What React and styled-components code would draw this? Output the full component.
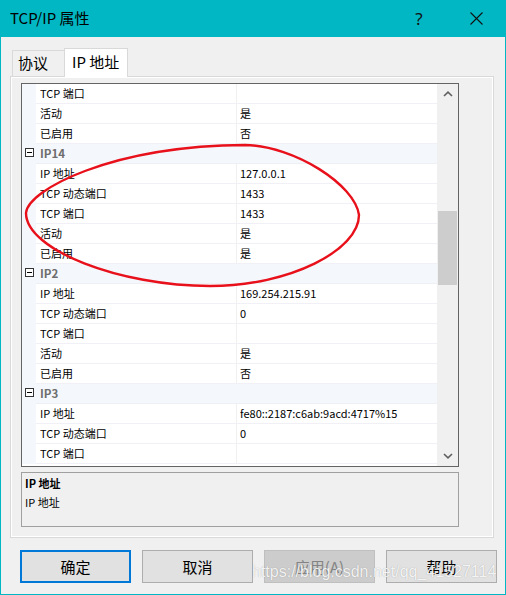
import React from "react";
import styled, { createGlobalStyle } from "styled-components";

const Global = createGlobalStyle`
  html, body { margin: 0; padding: 0; background: #ffffff; }
  body { font-family: "Noto Sans CJK SC", "Noto Sans", sans-serif; }
  * { box-sizing: border-box; }
`;

const FONT = `"Noto Sans CJK SC", "Noto Sans", sans-serif`;

const Window = styled.div`
  position: relative;
  width: 506px;
  height: 595px;
  border: 1px solid #00b7c3;
  border-top: none;
  background: #f0f0f0;
  display: flex;
  flex-direction: column;
  font-family: ${FONT};
  color: #000;
  overflow: hidden;
`;

const TitleBar = styled.div`
  height: 37px;
  flex: none;
  background: #00b7c3;
  display: flex;
  align-items: center;
  padding-left: 9px;
  padding-right: 6px;
`;

const Title = styled.div`
  flex: 1;
  font-size: 15px;
  line-height: 20px;
  padding-bottom: 1px;
`;

const CaptionButton = styled.div`
  width: 46px;
  height: 36px;
  margin-left: ${(p) => p.$gap || 0}px;
  display: flex;
  align-items: center;
  justify-content: center;
  font-family: "Noto Sans", sans-serif;
  font-size: 17px;
  color: #111;
`;

const TabStrip = styled.div`
  margin-top: 11px;
  height: 28px;
  padding-left: 11px;
  display: flex;
  align-items: flex-end;
  position: relative;
  z-index: 1;
`;

const Tab = styled.div`
  height: ${(p) => (p.$active ? 29 : 26)}px;
  margin-bottom: ${(p) => (p.$active ? -1 : 0)}px;
  margin-left: ${(p) => (p.$active ? -1 : 0)}px;
  width: ${(p) => p.$w}px;
  padding-left: ${(p) => (p.$active ? 7 : 5)}px;
  border: 1px solid #d9d9d9;
  border-bottom: none;
  background: ${(p) => (p.$active ? "#ffffff" : "#f0f0f0")};
  font-size: 15px;
  line-height: ${(p) => (p.$active ? 26 : 24)}px;
`;

const TabPanel = styled.div`
  margin-left: 9px;
  width: 484px;
  height: 462px;
  border: 1px solid #d9d9d9;
  box-shadow: inset 0 0 0 1px #ffffff;
  padding: 6px 0 0 10px;
  display: flex;
  flex-direction: column;
`;

const Grid = styled.div`
  width: 438px;
  height: 384px;
  border: 1px solid #646464;
  display: flex;
  background: #ffffff;
`;

const Rows = styled.div`
  width: 415px;
  height: 382px;
  overflow: hidden;
  display: flex;
  flex-direction: column;
  font-size: 11px;
  line-height: 19px;
`;

const Row = styled.div`
  flex: none;
  height: 20px;
  display: grid;
  grid-template-columns: 14px 201px 200px;
  background: #f4f7fc;
`;

const Gutter = styled.div`
  background: #f4f7fc;
  display: flex;
  align-items: flex-start;
  padding: 4px 0 0 3px;
`;

const LabelCell = styled.div`
  background: #ffffff;
  border-right: 1px solid #f0f0f0;
  border-bottom: 1px solid #f0f0f6;
  padding-left: 4px;
  white-space: nowrap;
`;

const ValueCell = styled.div`
  background: #ffffff;
  border-bottom: 1px solid #f0f0f6;
  padding-left: 3px;
  white-space: nowrap;
`;

const CategoryCell = styled.div`
  grid-column: 2 / 4;
  border-bottom: 1px solid #eef0f4;
  padding-left: 4px;
  font-weight: bold;
  font-size: 11.5px;
  color: #6d6d6d;
`;

const ScrollBar = styled.div`
  width: 21px;
  height: 382px;
  background: #f0f0f0;
  display: flex;
  flex-direction: column;
`;

const ScrollArrow = styled.div`
  height: 20px;
  flex: none;
  display: flex;
  align-items: center;
  justify-content: center;
`;

const ScrollTrack = styled.div`
  flex: 1;
  padding: ${(p) => p.$offset}px 1px 0 1px;
`;

const Thumb = styled.div`
  height: ${(p) => p.$h}px;
  background: #cdcdcd;
`;

const Description = styled.div`
  margin-top: 5px;
  width: 438px;
  height: 55px;
  border: 1px solid #a0a0a0;
  background: #f0f0f0;
  padding: 0 3px;
  font-size: 11px;
  line-height: 19px;
`;

const DescTitle = styled.div`
  font-weight: bold;
  padding-top: 1px;
`;

const ButtonRow = styled.div`
  margin-top: 12px;
  padding-left: 19px;
  display: flex;
  gap: 11px;
`;

const Button = styled.div`
  width: 111px;
  height: 33px;
  display: flex;
  align-items: center;
  justify-content: center;
  font-size: 15px;
  background: ${(p) => (p.$disabled ? "#cccccc" : "#e1e1e1")};
  border: ${(p) =>
    p.$default ? "2px solid #0078d7" : p.$disabled ? "1px solid #bfbfbf" : "1px solid #adadad"};
  color: ${(p) => (p.$disabled ? "#838383" : "#000")};
`;

const Watermark = styled.div`
  position: absolute;
  left: 251px;
  top: 563px;
  font-family: "Liberation Sans", Arial, sans-serif;
  font-size: 16px;
  line-height: 18px;
  color: rgba(255, 255, 255, 0.88);
  text-shadow: 0 0 1px rgba(0, 0, 0, 0.3);
  pointer-events: none;
  white-space: nowrap;
`;

const Overlay = styled.svg`
  position: absolute;
  left: -1px;
  top: 0;
  pointer-events: none;
`;

const Minus = () => (
  <svg width="9" height="9" viewBox="0 0 9 9">
    <rect x="0.5" y="0.5" width="8" height="8" fill="#fff" stroke="#333" strokeWidth="1" />
    <line x1="2" y1="4.5" x2="7" y2="4.5" stroke="#000" strokeWidth="1" />
  </svg>
);

const Chevron = ({ up }) => (
  <svg width="10" height="6" viewBox="0 0 10 6">
    <polyline
      points={up ? "1,5 5,1.2 9,5" : "1,1 5,4.8 9,1"}
      fill="none"
      stroke="#606060"
      strokeWidth="1.6"
    />
  </svg>
);

const rows = [
  ["TCP 端口", ""],
  ["活动", "是"],
  ["已启用", "否"],
  { cat: "IP14" },
  ["IP 地址", "127.0.0.1"],
  ["TCP 动态端口", "1433"],
  ["TCP 端口", "1433"],
  ["活动", "是"],
  ["已启用", "是"],
  { cat: "IP2" },
  ["IP 地址", "169.254.215.91"],
  ["TCP 动态端口", "0"],
  ["TCP 端口", ""],
  ["活动", "是"],
  ["已启用", "否"],
  { cat: "IP3" },
  ["IP 地址", "fe80::2187:c6ab:9acd:4717%15"],
  ["TCP 动态端口", "0"],
  ["TCP 端口", ""],
];

export default function App() {
  return (
    <>
      <Global />
      <Window>
        <TitleBar>
          <Title>TCP/IP 属性</Title>
          <CaptionButton>?</CaptionButton>
          <CaptionButton $gap={11}>
            <svg width="13" height="13" viewBox="0 0 13 13">
              <line x1="0.5" y1="0.5" x2="12.5" y2="12.5" stroke="#111" strokeWidth="1.1" />
              <line x1="12.5" y1="0.5" x2="0.5" y2="12.5" stroke="#111" strokeWidth="1.1" />
            </svg>
          </CaptionButton>
        </TitleBar>
        <TabStrip>
          <Tab $w={53}>协议</Tab>
          <Tab $active $w={64}>IP 地址</Tab>
        </TabStrip>
        <TabPanel>
          <Grid>
            <Rows>
              {rows.map((r, i) =>
                r.cat ? (
                  <Row key={i}>
                    <Gutter>
                      <Minus />
                    </Gutter>
                    <CategoryCell>{r.cat}</CategoryCell>
                  </Row>
                ) : (
                  <Row key={i}>
                    <Gutter />
                    <LabelCell>{r[0]}</LabelCell>
                    <ValueCell>{r[1]}</ValueCell>
                  </Row>
                )
              )}
            </Rows>
            <ScrollBar>
              <ScrollArrow>
                <Chevron up />
              </ScrollArrow>
              <ScrollTrack $offset={107}>
                <Thumb $h={74} />
              </ScrollTrack>
              <ScrollArrow>
                <Chevron />
              </ScrollArrow>
            </ScrollBar>
          </Grid>
          <Description>
            <DescTitle>IP 地址</DescTitle>
            <div>IP 地址</div>
          </Description>
        </TabPanel>
        <ButtonRow>
          <Button $default>确定</Button>
          <Button>取消</Button>
          <Button $disabled>应用(A)</Button>
          <Button>帮助</Button>
        </ButtonRow>
        <Watermark>https://blog.csdn.net/qq_41527114</Watermark>
        <Overlay width="506" height="595" viewBox="0 0 506 595">
          <path
            d="M 26 213 C 28 190, 110 146, 245 145 C 295 146, 355 185, 359 215 C 359 250, 290 286, 210 286 C 120 286, 26 250, 26 213 Z"
            fill="none"
            stroke="#e8101a"
            strokeWidth="2.4"
          />
        </Overlay>
      </Window>
    </>
  );
}
